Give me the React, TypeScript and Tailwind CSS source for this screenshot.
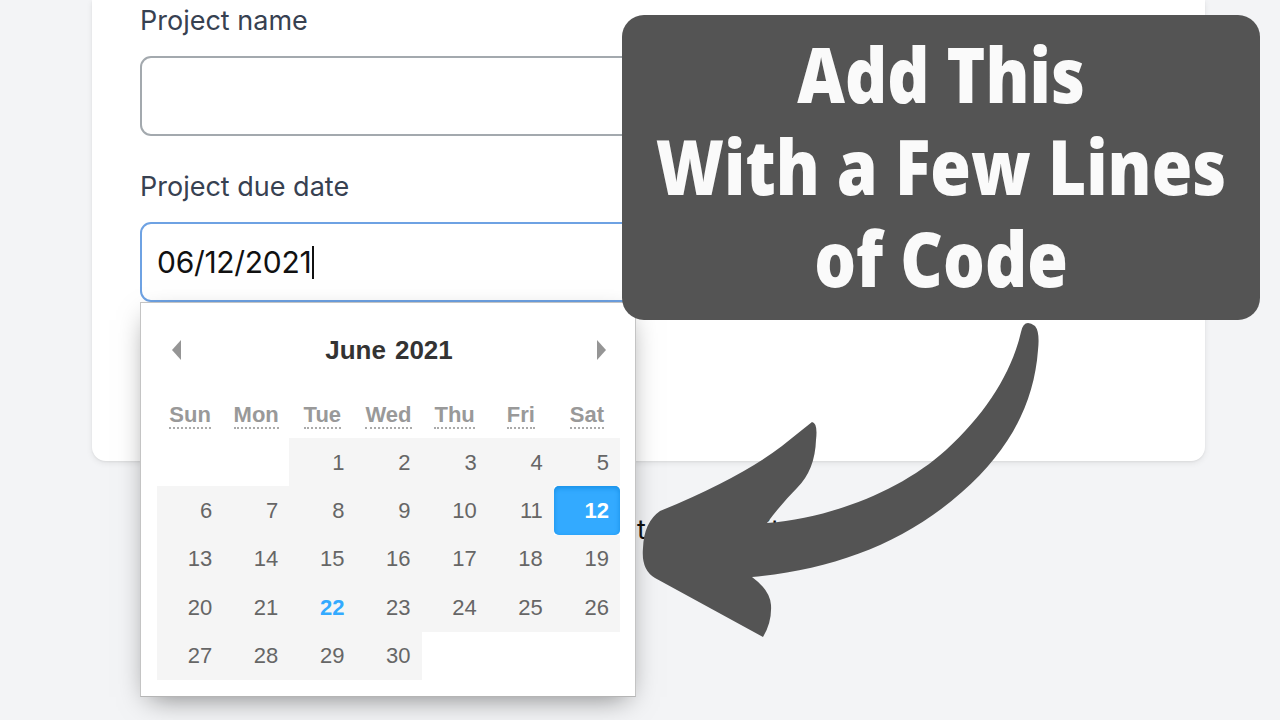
import React from "react";

const DAYS = ["Sun", "Mon", "Tue", "Wed", "Thu", "Fri", "Sat"];
const DAY_NAMES = ["Sunday", "Monday", "Tuesday", "Wednesday", "Thursday", "Friday", "Saturday"];

// June 2021 starts on a Tuesday
const CELLS: (number | null)[] = [
  null, null,
  ...Array.from({ length: 30 }, (_, i) => i + 1),
  null, null, null,
];

function Calendar() {
  const rows: (number | null)[][] = [];
  for (let i = 0; i < CELLS.length; i += 7) rows.push(CELLS.slice(i, i + 7));

  return (
    <div className="absolute left-0 top-full w-[496px] bg-white border border-[#c4c4c4] border-b-[#b5b5b5] shadow-[0_9px_27px_-9px_rgba(0,0,0,0.5)] font-['Liberation_Sans',Arial,sans-serif] z-10">
      {/* Title */}
      <div className="flex items-center justify-between h-[92px] pl-[31px] pr-[29px] pt-[2px]">
        <span className="w-0 h-0 border-y-[10px] border-y-transparent border-r-[9px] border-r-[#8a8a8a] opacity-90" />
        <div className="flex gap-[9px] text-[26px] font-bold text-[#333]">
          <span>June</span>
          <span>2021</span>
        </div>
        <span className="w-0 h-0 border-y-[10px] border-y-transparent border-l-[9px] border-l-[#8a8a8a] opacity-90" />
      </div>

      {/* Weekdays */}
      <div className="grid grid-cols-7 w-[463px] ml-[16px] h-[43px] pt-[8px]">
        {DAYS.map((d, i) => (
          <div key={d} className="flex items-start justify-center">
            <abbr
              title={DAY_NAMES[i]}
              className="text-[22px] leading-[24px] font-bold text-[#999] no-underline border-b-2 border-dotted border-[#aaa]"
            >
              {d}
            </abbr>
          </div>
        ))}
      </div>

      {/* Days */}
      <div className="w-[463px] ml-[16px] pb-[16px]">
        {rows.map((row, r) => (
          <div key={r} className="grid grid-cols-7 h-[48.4px]">
            {row.map((day, c) => {
              if (day === null) return <div key={c} />;
              const selected = day === 12;
              const today = day === 22;
              return (
                <div
                  key={c}
                  className={`flex items-center justify-end pr-[11px] text-[22px] ${
                    selected
                      ? "bg-[#33aaff] text-white font-bold rounded-[5px] shadow-[inset_0_2px_5px_#178fe5]"
                      : today
                      ? "bg-[#f5f5f5] text-[#33aaff] font-bold"
                      : "bg-[#f5f5f5] text-[#666]"
                  }`}
                >
                  {day}
                </div>
              );
            })}
          </div>
        ))}
      </div>
    </div>
  );
}

function Arrow() {
  return (
    <svg
      className="absolute inset-0 w-[1280px] h-[720px] pointer-events-none z-20"
      viewBox="0 0 1280 720"
    >
      <path
        fill="#545454"
        d="M 1021 332
           Q 1024 318 1035 326
           Q 1040 332 1038 350
           C 1034 405 1008 452 962 492
           C 905 543 832 570 752 577
           Q 770 590 771 605
           Q 772 622 763 637
           L 655 578
           Q 641 570 643 548
           Q 644 522 660 511
           Q 740 478 782 446
           Q 802 430 812 422
           Q 818 423 816 440
           Q 815 470 797 488
           Q 782 503 767 523
           C 832 518 902 490 946 450
           C 986 414 1012 372 1021 332 Z"
      />
    </svg>
  );
}

export default function App() {
  return (
    <div className="relative w-[1280px] h-[720px] overflow-hidden bg-[#f3f4f6] font-['Inter','Noto_Sans',sans-serif]">
      {/* Form card */}
      <div className="ml-[92px] w-[1113px] bg-white rounded-b-[14px] shadow-[0_2px_6px_rgba(0,0,0,0.08),0_1px_2px_rgba(0,0,0,0.05)] px-[48px] pt-[5px] pb-[159px]">
        <label className="block text-[27px] leading-[32px] text-[#374151]">Project name</label>
        <div className="mt-[19px] h-[80px] rounded-[11px] border-2 border-[#a3a9ae] bg-white" />

        <label className="block mt-[35px] text-[27px] leading-[32px] text-[#374151]">Project due date</label>
        <div className="relative mt-[19px]">
          <div className="h-[80px] rounded-[11px] border-2 border-[#6ea2e3] bg-white flex items-center pl-[15px]">
            <span className="text-[30px] text-[#111] tracking-[-0.3px]">06/12/2021</span>
            <span className="ml-[1px] w-[2px] h-[33px] bg-[#111]" />
          </div>
          <Calendar />
        </div>
      </div>

      {/* Text under the card, mostly hidden */}
      <p className="mt-[53px] pl-[637px] text-[27px] leading-[32px] text-[#111]">t the next item.</p>

      {/* Callout */}
      <div className="absolute left-[622px] top-[15px] w-[638px] h-[305px] rounded-[22px] bg-[#545454] flex flex-col items-center justify-center z-20">
        <div className="whitespace-nowrap text-center text-[#fafafa] text-[77px] leading-[92px] font-extrabold font-['Open_Sans',sans-serif] scale-x-[0.854] -mt-[4px]">
          <div>Add This</div>
          <div>With a Few Lines</div>
          <div>of Code</div>
        </div>
      </div>

      <Arrow />
    </div>
  );
}
